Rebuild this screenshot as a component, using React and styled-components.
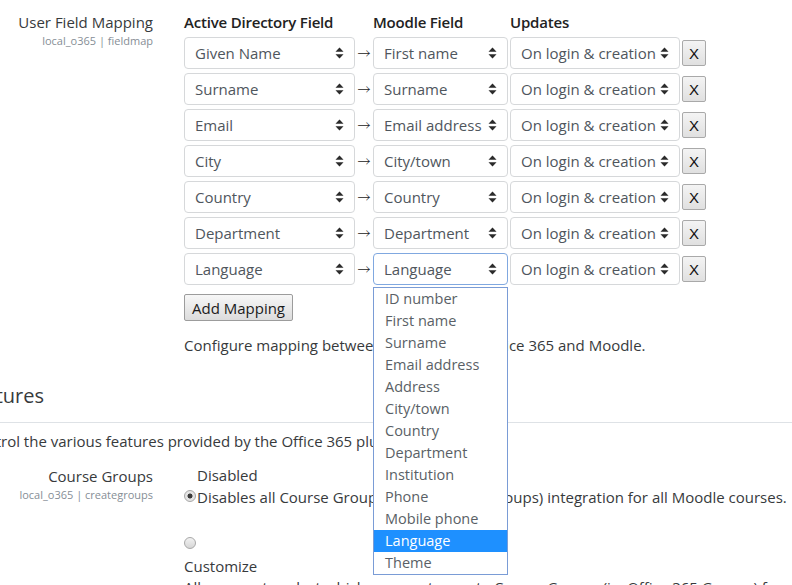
import React from 'react'
import styled, { createGlobalStyle } from 'styled-components'

const GlobalStyle = createGlobalStyle`
  html, body {
    margin: 0;
    padding: 0;
    background: #fff;
    overflow: hidden;
  }
  body {
    font-family: 'Open Sans', 'Noto Sans', sans-serif;
    color: #373a3c;
    font-size: 15px;
  }
`

const Page = styled.div`
  width: 792px;
  height: 585px;
  overflow: hidden;
  padding-top: 11px;
  box-sizing: border-box;
`

const FormRow = styled.div`
  display: grid;
  grid-template-columns: 185px 1fr;
  column-gap: 31px;
  margin-left: -32px;
  margin-top: ${(p) => p.$top || 0}px;
`

const LabelCell = styled.div`
  text-align: right;
`

const Label = styled.div`
  font-size: 15px;
  line-height: 22px;
  color: #373a3c;
`

const SubLabel = styled.div`
  font-size: 11px;
  line-height: 14px;
  color: #868e96;
  margin-top: 1px;
`

const MapGrid = styled.div`
  display: grid;
  grid-template-columns: 171px 18px 135px 172px 26px;
  row-gap: 4px;
  align-items: center;
`

const HeadCell = styled.div`
  font-size: 15px;
  font-weight: 600;
  line-height: 22px;
  color: #222;
  letter-spacing: -0.2px;
  justify-self: ${(p) => (p.$end ? 'end' : 'start')};
  width: ${(p) => (p.$end ? '170px' : 'auto')};
`

const SelectWrap = styled.div`
  position: relative;
  width: ${(p) => p.$w}px;
  justify-self: ${(p) => (p.$end ? 'end' : 'start')};
`

const SelectBox = styled.div`
  box-sizing: border-box;
  height: 32px;
  border: 1px solid ${(p) => (p.$active ? '#80a8e0' : '#d6d8da')};
  border-radius: 4px;
  display: flex;
  align-items: center;
  justify-content: space-between;
  padding: 0 10px 0 10px;
  color: #4f565d;
  font-size: 15px;
  white-space: nowrap;
  background: #fff;
`

const Arrow = styled.div`
  text-align: center;
  font-size: 13px;
  font-weight: 300;
  line-height: 20px;
  color: #222;
  font-family: 'Noto Sans CJK JP', 'DejaVu Sans', sans-serif;
`

const RemoveButton = styled.button`
  justify-self: end;
  width: 24px;
  height: 26px;
  padding: 0;
  border: 1px solid #a9a9a9;
  border-radius: 2px;
  background: linear-gradient(#f4f4f4, #e0e0e0);
  font-family: 'Liberation Sans', Arial, sans-serif;
  font-size: 15px;
  color: #111;
`

const AddButton = styled.button`
  margin-top: 9px;
  height: 27px;
  width: 109px;
  padding: 0;
  border: 1px solid #9c9c9c;
  border-radius: 2px;
  background: linear-gradient(#f7f7f7, #dcdcdc);
  font-family: inherit;
  font-size: 15px;
  color: #1b1b1b;
`

const Text = styled.div`
  font-size: 15px;
  line-height: ${(p) => p.$lh || 22}px;
  color: #373a3c;
  white-space: nowrap;
  margin-top: ${(p) => p.$top || 0}px;
  padding-left: ${(p) => p.$indent || 0}px;
`

const Section = styled.div`
  margin-top: 26px;
  margin-left: -32px;
`

const Legend = styled.div`
  font-size: 20px;
  line-height: 28px;
  color: #373a3c;
  padding-bottom: 12px;
  border-bottom: 1px solid #dee2e6;
  width: 900px;
  text-indent: -5px;
`

const Options = styled.div`
  display: flex;
  flex-direction: column;
`

const OptionLine = styled.div`
  display: flex;
  align-items: center;
  line-height: 22px;
  height: 22px;
  margin-top: ${(p) => p.$top || 0}px;
`

const Radio = styled.span`
  display: inline-block;
  box-sizing: border-box;
  width: 12px;
  height: 12px;
  border-radius: 50%;
  border: 1px solid #a8a8a8;
  background: ${(p) =>
    p.$checked
      ? 'radial-gradient(circle, #3c3c3c 0 2.2px, #e4e4e4 2.8px)'
      : 'linear-gradient(#f2f2f2, #d6d6d6)'};
  margin-right: 1px;
  margin-top: -2px;
  flex: none;
`

const DropList = styled.ul`
  position: absolute;
  top: 34px;
  left: 0;
  width: 135px;
  box-sizing: border-box;
  margin: 0;
  padding: 0;
  list-style: none;
  border: 1px solid #7a9cd6;
  background: #fff;
  z-index: 5;
`

const DropItem = styled.li`
  height: 22px;
  line-height: 22px;
  padding-left: 11px;
  font-size: 14.5px;
  color: ${(p) => (p.$selected ? '#fff' : '#5a5f66')};
  background: ${(p) => (p.$selected ? '#1e90ff' : 'transparent')};
  white-space: nowrap;
`

const Updown = () => (
  <svg width="9" height="12" viewBox="0 0 9 12">
    <path d="M4.5 0.5 L8.5 4.8 L0.5 4.8 Z" fill="#2b2b2b" />
    <path d="M4.5 11.5 L8.5 7.2 L0.5 7.2 Z" fill="#2b2b2b" />
  </svg>
)

const Select = ({ value, width, end, active, children }) => (
  <SelectWrap $w={width} $end={end}>
    <SelectBox $active={active}>
      <span>{value}</span>
      <Updown />
    </SelectBox>
    {children}
  </SelectWrap>
)

const mappings = [
  ['Given Name', 'First name'],
  ['Surname', 'Surname'],
  ['Email', 'Email address'],
  ['City', 'City/town'],
  ['Country', 'Country'],
  ['Department', 'Department'],
  ['Language', 'Language'],
]

const moodleFields = [
  'ID number',
  'First name',
  'Surname',
  'Email address',
  'Address',
  'City/town',
  'Country',
  'Department',
  'Institution',
  'Phone',
  'Mobile phone',
  'Language',
  'Theme',
]

export default function App() {
  return (
    <Page>
      <GlobalStyle />
      <FormRow>
        <LabelCell>
          <Label>User Field Mapping</Label>
          <SubLabel>local_o365 | fieldmap</SubLabel>
        </LabelCell>
        <div>
          <MapGrid>
            <HeadCell>Active Directory Field</HeadCell>
            <div />
            <HeadCell>Moodle Field</HeadCell>
            <HeadCell $end>Updates</HeadCell>
            <div />
            {mappings.map(([ad, moodle], i) => {
              const last = i === mappings.length - 1
              return (
                <React.Fragment key={ad}>
                  <Select value={ad} width={171} />
                  <Arrow>→</Arrow>
                  <Select value={moodle} width={135} active={last}>
                    {last && (
                      <DropList>
                        {moodleFields.map((f) => (
                          <DropItem key={f} $selected={f === 'Language'}>
                            {f}
                          </DropItem>
                        ))}
                      </DropList>
                    )}
                  </Select>
                  <Select value="On login & creation" width={170} end />
                  <RemoveButton>X</RemoveButton>
                </React.Fragment>
              )
            })}
          </MapGrid>
          <AddButton>Add Mapping</AddButton>
          <Text $top={13}>Configure mapping between the Microsoft Office 365 and Moodle.</Text>
        </div>
      </FormRow>

      <Section>
        <Legend>Features</Legend>
        <Text $top={7}>Control the various features provided by the Office 365 plugin.</Text>
      </Section>

      <FormRow $top={13}>
        <LabelCell>
          <Label>Course Groups</Label>
          <SubLabel>local_o365 | creategroups</SubLabel>
        </LabelCell>
        <Options>
          <Text $indent={13} $lh={21}>Disabled</Text>
          <OptionLine>
            <Radio $checked />
            <span>Disables all Course Groups (ie. Office 365 Groups) integration for all Moodle courses.</span>
          </OptionLine>
          <OptionLine $top={25}>
            <Radio />
          </OptionLine>
          <Text>Customize</Text>
          <Text $top={-1}>Allows you to select which courses to create Course Groups (ie. Office 365 Groups) for.</Text>
        </Options>
      </FormRow>
    </Page>
  )
}
